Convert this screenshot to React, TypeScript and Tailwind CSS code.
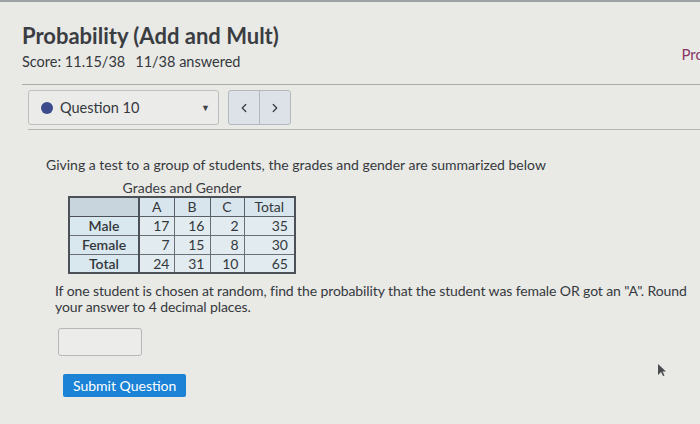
import { ChevronLeft, ChevronRight } from "lucide-react";

const rows = [
  { label: "Male", a: 17, b: 16, c: 2, total: 35 },
  { label: "Female", a: 7, b: 15, c: 8, total: 30 },
  { label: "Total", a: 24, b: 31, c: 10, total: 65 },
];

function GradesTable() {
  return (
    <div className="ml-[22px] mt-[6px] w-[228px]">
      <div className="text-center text-[14px] leading-[16px] text-[#3b3f44]">Grades and Gender</div>
      <table className="w-[228px] border-collapse border-2 border-[#4b5156] text-[14px] leading-[17px] text-[#34383c]">
        <thead>
          <tr className="h-[19px] bg-[#d9e5ec]">
            <th className="w-[70px] border-r-2 border-b border-[#4b5156] bg-[#c9d5dd]" />
            <th className="w-[35px] border-b border-r border-[#5a6065] font-normal">A</th>
            <th className="w-[36px] border-b border-r border-[#5a6065] font-normal">B</th>
            <th className="w-[34px] border-b border-r border-[#5a6065] font-normal">C</th>
            <th className="border-b border-[#5a6065] font-normal">Total</th>
          </tr>
        </thead>
        <tbody>
          {rows.map((r) => (
            <tr key={r.label} className="h-[19px] border-t border-[#6a7075]">
              <td className="border-r-2 border-[#4b5156] bg-[#d9e7ee] text-center font-semibold">{r.label}</td>
              <td className="border-r border-[#6a7075] bg-[#e1ebf0] pr-[4px] text-right">{r.a}</td>
              <td className="border-r border-[#6a7075] bg-[#e1ebf0] pr-[5px] text-right">{r.b}</td>
              <td className="border-r border-[#6a7075] bg-[#e1ebf0] pr-[5px] text-right">{r.c}</td>
              <td className="bg-[#e1ebf0] pr-[6px] text-right">{r.total}</td>
            </tr>
          ))}
        </tbody>
      </table>
    </div>
  );
}

export default function App() {
  return (
    <div
      className="relative h-[424px] w-[700px] overflow-hidden border-t-2 border-[#9fa2a4] bg-[#e9e9e6] text-[#3a3e42]"
      style={{ fontFamily: "Lato, 'Open Sans', sans-serif" }}
    >
      {/* header */}
      <div className="flex items-start justify-between pl-[22px] pt-[21px]">
        <div>
          <h1 className="text-[22px] font-bold leading-[26px] text-[#3a3d41]">Probability (Add and Mult)</h1>
          <div className="mt-[4px] flex gap-[10px] text-[14.5px] leading-[18px] text-[#34383c]">
            <span>Score: 11.15/38</span>
            <span>11/38 answered</span>
          </div>
        </div>
        <span className="mr-[-4px] mt-[20px] text-[15px] text-[#8a3467]">Pro</span>
      </div>

      <div className="ml-[22px] mt-[13px] h-px bg-[#a9abac]" />

      {/* question nav */}
      <div className="ml-[28px] mt-[5px] flex items-center gap-[9px]">
        <div className="flex h-[35px] w-[191px] items-center rounded-[3px] border border-[#bdbfc0] bg-[#ebebe9] pl-[12px] pr-[8px]">
          <span className="h-[12px] w-[12px] rounded-full bg-[#3c4b8c]" />
          <span className="ml-[7px] text-[14.5px] text-[#34383c]">Question 10</span>
          <span className="ml-auto text-[9px] text-[#3f4347]">▼</span>
        </div>
        <div className="flex h-[35px] w-[63px] overflow-hidden rounded-[3px] border border-[#b3b8bd] bg-[#dde2e8]">
          <button className="flex w-[31px] items-center justify-center border-r border-[#b3b8bd] text-[#3a3e42]">
            <ChevronLeft size={14} strokeWidth={2.2} />
          </button>
          <button className="flex flex-1 items-center justify-center text-[#3a3e42]">
            <ChevronRight size={14} strokeWidth={2.2} />
          </button>
        </div>
      </div>

      <div className="ml-[28px] mt-[4px] h-px bg-[#b3b5b6]" />

      {/* question body */}
      <div className="pl-[46px] pt-[26px]">
        <p className="text-[14px] leading-[18px] text-[#35393d]">
          Giving a test to a group of students, the grades and gender are summarized below
        </p>
        <GradesTable />
        <p className="ml-[9px] mt-[9px] whitespace-nowrap text-[14px] leading-[16px] tracking-[-0.1px] text-[#35393d]">
          If one student is chosen at random, find the probability that the student was female OR got an "A". Round
          <br />
          your answer to 4 decimal places.
        </p>
        <div className="ml-[12px] mt-[13px] h-[28px] w-[84px] rounded-[3px] border border-[#b5b7b8] bg-[#ececea]" />
        <button className="ml-[17px] mt-[18px] block h-[23px] rounded-[2px] bg-[#1b82d6] px-[10px] text-[14px] leading-[23px] text-white">
          Submit Question
        </button>
      </div>

      {/* mouse pointer */}
      <svg className="absolute left-[657px] top-[361px]" width="10" height="14" viewBox="0 0 10 14">
        <path d="M1 1 L1 12 L4 9 L6 13 L7.5 12.4 L5.6 8.5 L9 8.5 Z" fill="#4a4d50" />
      </svg>
    </div>
  );
}
